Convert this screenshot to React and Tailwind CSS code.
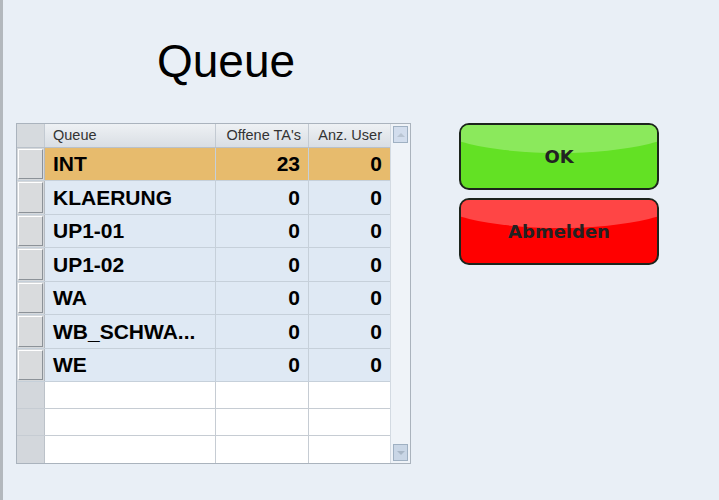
import React from "react";

const rows = [
  { name: "INT", open: 23, users: 0, selected: true },
  { name: "KLAERUNG", open: 0, users: 0 },
  { name: "UP1-01", open: 0, users: 0 },
  { name: "UP1-02", open: 0, users: 0 },
  { name: "WA", open: 0, users: 0 },
  { name: "WB_SCHWA...", open: 0, users: 0 },
  { name: "WE", open: 0, users: 0 },
];

function GlossButton({ label, base, gloss }) {
  return (
    <button
      className={`relative w-[200px] h-[67px] rounded-[10px] border-2 border-[#1c241c] overflow-hidden ${base} font-['DejaVu_Sans',sans-serif] font-bold text-[18px] text-[#222]`}
    >
      <span className={`absolute left-[-15%] top-[-34px] w-[130%] h-[62px] rounded-[50%] ${gloss}`} />
      <span className="relative">{label}</span>
    </button>
  );
}

export default function App() {
  return (
    <div className="w-[719px] h-[500px] bg-[#e9eff6] border-l-[3px] border-[#b3b8bd] flex font-['Liberation_Sans',Arial,sans-serif] overflow-hidden">
      <div className="flex flex-col pl-[13px]">
        <h1 className="mt-[38px] pl-[141px] text-[46px] leading-none text-black font-normal">Queue</h1>

        <div className="mt-[39px] w-[395px] h-[341px] border border-[#aab3bd] bg-white flex">
          <div className="flex flex-col w-[373px]">
            {/* header */}
            <div className="flex h-[24px] bg-gradient-to-b from-[#eef1f4] to-[#d9dee4] border-b border-[#b9c1ca] text-[14.5px] text-[#333]">
              <div className="w-[28px] border-r border-[#c3cad2] bg-[#d6dade]" />
              <div className="w-[171px] border-r border-[#c3cad2] flex items-center pl-[8px]">Queue</div>
              <div className="w-[93px] border-r border-[#c3cad2] flex items-center justify-end pr-[7px]">Offene TA's</div>
              <div className="w-[81px] flex items-center justify-end pr-[8px]">Anz. User</div>
            </div>

            {rows.map((r) => (
              <div
                key={r.name}
                className={`flex h-[33.5px] border-b border-[#c6d0da] text-[21px] font-bold text-black ${
                  r.selected ? "bg-[#e7bb6d]" : "bg-[#dfe9f4]"
                }`}
              >
                <div className="w-[28px] bg-[#d5d8db] flex p-[1px] border-r border-[#b4bac1]">
                  <div className="flex-1 border border-t-white border-l-white border-b-[#8c9298] border-r-[#8c9298] bg-[#d9dbdd]" />
                </div>
                <div className="w-[171px] border-r border-[#c6d0da] flex items-center pl-[8px]">{r.name}</div>
                <div className="w-[93px] border-r border-[#c6d0da] flex items-center justify-end pr-[8px]">{r.open}</div>
                <div className="w-[81px] flex items-center justify-end pr-[8px]">{r.users}</div>
              </div>
            ))}

            {[0, 1, 2].map((i) => (
              <div key={i} className={`flex h-[27px] bg-white ${i < 2 ? "border-b border-[#c6ccd3]" : ""}`}>
                <div className="w-[28px] bg-[#d3d7dc] border-r border-[#bcc2c9]" />
                <div className="w-[171px] border-r border-[#c6ccd3]" />
                <div className="w-[93px] border-r border-[#c6ccd3]" />
                <div className="w-[81px]" />
              </div>
            ))}
          </div>

          {/* scrollbar */}
          <div className="w-[22px] bg-[#eff3f8] border-l border-[#d3dae2] flex flex-col justify-between p-[2px]">
            <div className="h-[17px] border border-[#9fb0c2] bg-[#d2dded] flex items-center justify-center">
              <div className="w-0 h-0 border-l-[4px] border-r-[4px] border-b-[4px] border-l-transparent border-r-transparent border-b-[#b8c4d2]" />
            </div>
            <div className="h-[17px] border border-[#9fb0c2] bg-[#c9d6e6] flex items-center justify-center">
              <div className="w-0 h-0 border-l-[4px] border-r-[4px] border-t-[4px] border-l-transparent border-r-transparent border-t-[#a9b7c7]" />
            </div>
          </div>
        </div>
      </div>

      <div className="ml-[48px] mt-[123px] flex flex-col gap-[8px]">
        <GlossButton label="OK" base="bg-[#63e124]" gloss="bg-[#8be95c]" />
        <GlossButton label="Abmelden" base="bg-[#ff0000]" gloss="bg-[#ff4545]" />
      </div>
    </div>
  );
}
